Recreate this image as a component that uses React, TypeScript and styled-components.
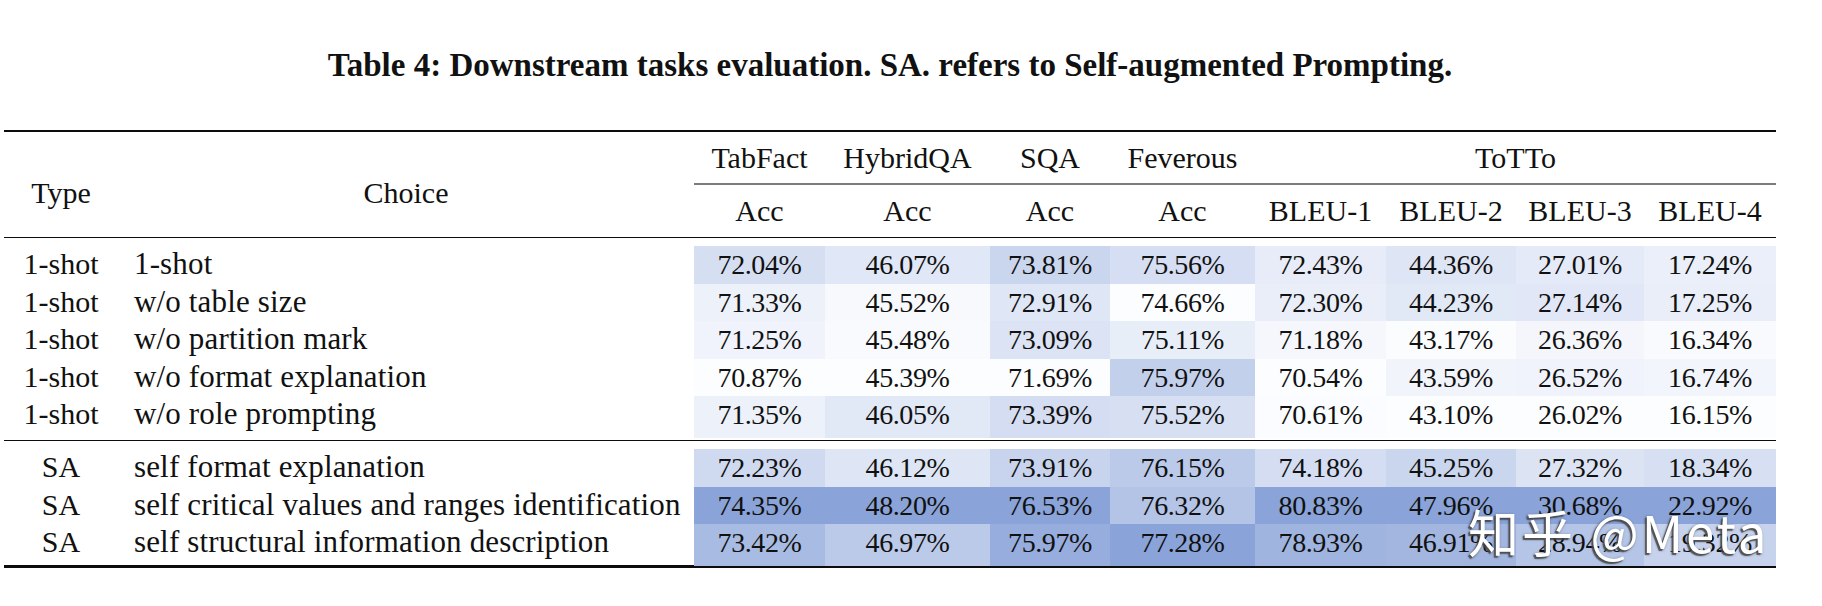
import React from 'react';
import styled, { createGlobalStyle } from 'styled-components';

const GlobalStyle = createGlobalStyle`
  html, body { margin: 0; padding: 0; background: #ffffff; }
  body { font-family: "Liberation Serif", "Times New Roman", serif; color: #111; }
`;

const COLS = '114px 576px 131px 165px 120px 145px 131px 130px 128px 132px';

type Row = { type: string; choice: string; values: number[] };

const oneShot: Row[] = [
  { type: '1-shot', choice: '1-shot', values: [72.04, 46.07, 73.81, 75.56, 72.43, 44.36, 27.01, 17.24] },
  { type: '1-shot', choice: 'w/o table size', values: [71.33, 45.52, 72.91, 74.66, 72.3, 44.23, 27.14, 17.25] },
  { type: '1-shot', choice: 'w/o partition mark', values: [71.25, 45.48, 73.09, 75.11, 71.18, 43.17, 26.36, 16.34] },
  { type: '1-shot', choice: 'w/o format explanation', values: [70.87, 45.39, 71.69, 75.97, 70.54, 43.59, 26.52, 16.74] },
  { type: '1-shot', choice: 'w/o role prompting', values: [71.35, 46.05, 73.39, 75.52, 70.61, 43.1, 26.02, 16.15] },
];

const selfAug: Row[] = [
  { type: 'SA', choice: 'self format explanation', values: [72.23, 46.12, 73.91, 76.15, 74.18, 45.25, 27.32, 18.34] },
  { type: 'SA', choice: 'self critical values and ranges identification', values: [74.35, 48.2, 76.53, 76.32, 80.83, 47.96, 30.68, 22.92] },
  { type: 'SA', choice: 'self structural information description', values: [73.42, 46.97, 75.97, 77.28, 78.93, 46.91, 28.94, 19.32] },
];

const all = [...oneShot, ...selfAug];
const colMin = all[0].values.map((_, i) => Math.min(...all.map((r) => r.values[i])));
const colMax = all[0].values.map((_, i) => Math.max(...all.map((r) => r.values[i])));

const LOW = [252, 253, 255];
const HIGH = [138, 163, 216];

function heat(v: number, i: number): string {
  const t = (v - colMin[i]) / (colMax[i] - colMin[i]);
  const c = LOW.map((l, k) => Math.round(l + (HIGH[k] - l) * t));
  return `rgb(${c[0]}, ${c[1]}, ${c[2]})`;
}

const Page = styled.div`
  position: relative;
  width: 1772px;
  margin-left: 4px;
  padding-top: 47px;
  height: 606px;
  box-sizing: border-box;
`;

const Caption = styled.div`
  text-align: center;
  font-weight: bold;
  font-size: 33px;
  line-height: 36px;
  margin-bottom: 47px;
  color: #111;
`;

const Rule = styled.div<{ $h: number; $mt?: number; $mb?: number }>`
  height: ${(p) => p.$h}px;
  margin-top: ${(p) => p.$mt ?? 0}px;
  margin-bottom: ${(p) => p.$mb ?? 0}px;
  background: #0c0c0c;
`;

const HeaderGrid = styled.div`
  display: grid;
  grid-template-columns: ${COLS};
  grid-template-rows: 51px 1.5px 52px;
`;

const HeadCell = styled.div<{ $col: string; $row: string; $pt?: number }>`
  grid-column: ${(p) => p.$col};
  grid-row: ${(p) => p.$row};
  display: flex;
  align-items: center;
  justify-content: center;
  padding-top: ${(p) => p.$pt ?? 0}px;
  font-size: 30px;
  white-space: nowrap;
`;

const CMidRule = styled.div`
  grid-column: 3 / 11;
  grid-row: 2;
  background: #7c7c7c;
`;

const Body = styled.div<{ $pt: number }>`
  padding-top: ${(p) => p.$pt}px;
`;

const DataRow = styled.div<{ $h: number }>`
  display: grid;
  grid-template-columns: ${COLS};
  height: ${(p) => p.$h}px;
`;

const TypeCell = styled.div`
  display: flex;
  align-items: center;
  justify-content: center;
  padding-bottom: 6px;
  font-size: 30px;
  white-space: nowrap;
`;

const ChoiceCell = styled.div`
  display: flex;
  align-items: center;
  padding-left: 16px;
  padding-bottom: 6px;
  font-size: 31px;
  letter-spacing: 0.15px;
  white-space: nowrap;
`;

const ValueCell = styled.div<{ $bg: string }>`
  display: flex;
  align-items: center;
  justify-content: center;
  padding-bottom: 4px;
  background: ${(p) => p.$bg};
  font-size: 28px;
  letter-spacing: -0.4px;
  white-space: nowrap;
`;

const Watermark = styled.div`
  position: absolute;
  left: 1464px;
  top: 506px;
  font-family: "Noto Sans CJK SC", "Noto Sans", sans-serif;
  font-size: 51px;
  line-height: 1;
  color: #ffffff;
  letter-spacing: 3px;
  white-space: nowrap;
  text-shadow: -2px 2px 1px rgba(70, 70, 70, 0.85), -1px 1px 3px rgba(0, 0, 0, 0.5);
  pointer-events: none;
`;

const fmt = (v: number) => `${v.toFixed(2)}%`;

function Rows({ rows, h }: { rows: Row[]; h: number }) {
  return (
    <>
      {rows.map((r) => (
        <DataRow key={r.choice} $h={h}>
          <TypeCell>{r.type}</TypeCell>
          <ChoiceCell>{r.choice}</ChoiceCell>
          {r.values.map((v, i) => (
            <ValueCell key={i} $bg={heat(v, i)}>
              {fmt(v)}
            </ValueCell>
          ))}
        </DataRow>
      ))}
    </>
  );
}

export default function App() {
  const top = ['TabFact', 'HybridQA', 'SQA', 'Feverous'];
  const sub = ['Acc', 'Acc', 'Acc', 'Acc', 'BLEU-1', 'BLEU-2', 'BLEU-3', 'BLEU-4'];
  return (
    <>
      <GlobalStyle />
      <Page>
        <Caption>Table 4: Downstream tasks evaluation. SA. refers to Self-augmented Prompting.</Caption>
        <Rule $h={2} />
        <HeaderGrid>
          <HeadCell $col="1" $row="1 / 4" $pt={18}>Type</HeadCell>
          <HeadCell $col="2" $row="1 / 4" $pt={18}>Choice</HeadCell>
          {top.map((t, i) => (
            <HeadCell key={t} $col={`${i + 3}`} $row="1">
              {t}
            </HeadCell>
          ))}
          <HeadCell $col="7 / 11" $row="1">ToTTo</HeadCell>
          <CMidRule />
          {sub.map((s, i) => (
            <HeadCell key={i} $col={`${i + 3}`} $row="3">
              {s}
            </HeadCell>
          ))}
        </HeaderGrid>
        <Rule $h={1.5} />
        <Body $pt={8}>
          <Rows rows={oneShot} h={37.5} />
        </Body>
        <Rule $h={1.5} $mt={6} />
        <Body $pt={8}>
          <Rows rows={selfAug} h={37.7} />
        </Body>
        <Rule $h={2.5} $mt={3} />
        <Watermark>知乎 @Meta</Watermark>
      </Page>
    </>
  );
}
